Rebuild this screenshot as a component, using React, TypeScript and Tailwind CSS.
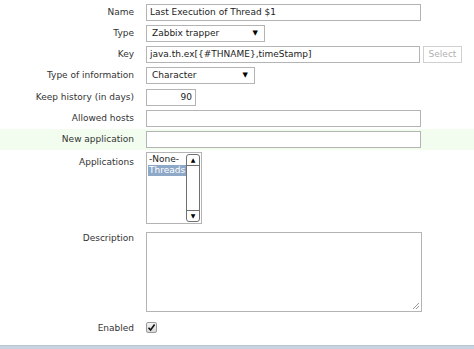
import React from "react";

const font = { fontFamily: '"DejaVu Sans", Verdana, sans-serif' };

function Label({ children, top, pt }: { children: React.ReactNode; top?: boolean; pt?: string }) {
  return (
    <div
      className={`w-[134px] shrink-0 text-right text-[9px] text-[#333] ${top ? `self-start ${pt ?? "pt-[4px]"}` : "self-center"}`}
    >
      {children}
    </div>
  );
}

function TextBox({ w, value, right }: { w: string; value?: string; right?: boolean }) {
  return (
    <div
      className={`${w} h-[17px] border border-[#b4b4b4] bg-white flex items-center px-[3px] text-[9px] text-[#222] ${right ? "justify-end" : ""}`}
    >
      {value}
    </div>
  );
}

function Select({ w, value }: { w: string; value: string }) {
  return (
    <div className={`${w} h-[17px] border border-[#b4b4b4] bg-white flex items-center justify-between pl-[5px] pr-[6px] text-[9px] text-[#222]`}>
      <span>{value}</span>
      <span className="text-[7px] text-black">▼</span>
    </div>
  );
}

export default function App() {
  return (
    <div className="w-[474px] h-[349px] bg-white relative overflow-hidden" style={font}>
      <div className="pt-[2px] flex flex-col">
        <div className="flex gap-[12px] py-[2px]">
          <Label>Name</Label>
          <TextBox w="w-[275px]" value="Last Execution of Thread $1" />
        </div>
        <div className="flex gap-[12px] py-[2px]">
          <Label>Type</Label>
          <Select w="w-[119px]" value="Zabbix trapper" />
        </div>
        <div className="flex gap-[12px] py-[2px]">
          <Label>Key</Label>
          <TextBox w="w-[274px]" value="java.th.ex[{#THNAME},timeStamp]" />
          <div className="-ml-[9px] w-[39px] h-[17px] border border-[#d0d0d0] bg-white flex items-center justify-center text-[9px] text-[#b0b0b0]">
            Select
          </div>
        </div>
        <div className="flex gap-[12px] py-[2px]">
          <Label>Type of information</Label>
          <Select w="w-[109px]" value="Character" />
        </div>
        <div className="flex gap-[12px] py-[2px] mt-[1px]">
          <Label>Keep history (in days)</Label>
          <TextBox w="w-[50px]" value="90" right />
        </div>
        <div className="flex gap-[12px] py-[2px]">
          <Label>Allowed hosts</Label>
          <TextBox w="w-[275px]" />
        </div>
        <div className="flex gap-[12px] py-[2px] bg-[#f2fdf0]">
          <Label>New application</Label>
          <TextBox w="w-[275px]" />
        </div>
        <div className="flex gap-[12px] pt-[2px] pb-[6px]">
          <Label top>Applications</Label>
          <div className="w-[56px] h-[72px] border border-[#b4b4b4] bg-white flex">
            <div className="flex-1 pt-[1px] pl-[1px] text-[9px] leading-[11px]">
              <div className="text-[#222] pl-[1px]">-None-</div>
              <div className="bg-[#8ea8c8] text-white pl-[1px]">Threads</div>
            </div>
            <div className="w-[14px] my-[1px] mr-[1px] border border-[#707070] rounded-[3px] bg-white flex flex-col justify-between">
              <div className="h-[11px] border-b border-[#707070] flex items-center justify-center text-[6px] leading-none">▲</div>
              <div className="h-[11px] border-t border-[#707070] flex items-center justify-center text-[6px] leading-none">▼</div>
            </div>
          </div>
        </div>
        <div className="flex gap-[12px] py-[2px]">
          <Label top pt="pt-[0px]">Description</Label>
          <div className="w-[276px] h-[80px] border border-[#b4b4b4] bg-white relative">
            <svg className="absolute right-[1px] bottom-[1px]" width="8" height="8" viewBox="0 0 8 8">
              <line x1="7" y1="1" x2="1" y2="7" stroke="#999" strokeWidth="1" />
              <line x1="7" y1="4" x2="4" y2="7" stroke="#999" strokeWidth="1" />
            </svg>
          </div>
        </div>
        <div className="flex gap-[12px] pt-[8px]">
          <Label>Enabled</Label>
          <div className="w-[11px] h-[11px] border border-[#9a9a9a] rounded-[2px] bg-gradient-to-b from-[#f4f4f4] to-[#d8d8d8] flex items-center justify-center">
            <svg width="9" height="9" viewBox="0 0 9 9">
              <path d="M1.5 4.8 L3.6 7 L7.6 1.6" fill="none" stroke="#111" strokeWidth="1.6" />
            </svg>
          </div>
        </div>
      </div>
      <div className="absolute left-0 right-0 bottom-0 h-[4px] bg-[#c9d4e0] border-t border-[#b8c4d2]" />
    </div>
  );
}
